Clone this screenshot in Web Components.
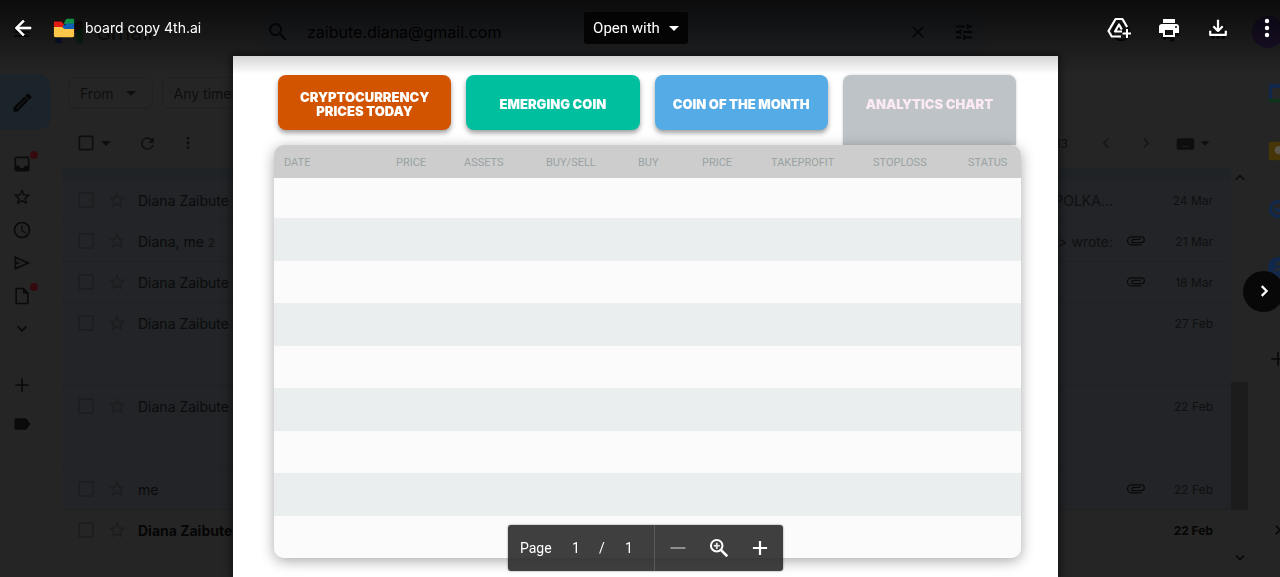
<!DOCTYPE html>
<html lang="en">
<head>
<meta charset="utf-8">
<title>board copy 4th.ai</title>
<style>
html, body { margin: 0; height: 100%; overflow: hidden; background: #252525; font-family: Roboto, "Liberation Sans", sans-serif; font-size: 14px; }
</style>
</head>
<body>
<mail-app></mail-app>
<file-viewer name="board copy 4th.ai"></file-viewer>

<script>
const define = (name, html, setup) => {
  const tpl = document.createElement('template');
  tpl.innerHTML = `<style>
    *, :host { box-sizing: border-box; }
    :host { display: block; }
    button { font: inherit; color: inherit; background: none; border: 0; padding: 0; margin: 0; }
  </style>` + html;
  customElements.define(name, class extends HTMLElement {
    constructor() {
      super();
      this.attachShadow({ mode: 'open' });
    }
    connectedCallback() {
      if (this.shadowRoot.childNodes.length) return;
      this.shadowRoot.append(tpl.content.cloneNode(true));
      if (setup) setup(this, this.shadowRoot);
    }
  });
};

/* Icon shapes, all on a 24-unit grid */
const ICONS = {
  menu: '<path d="M3 6h18v2H3zm0 5h18v2H3zm0 5h18v2H3z"/>',
  back: '<path d="M20 11H7.83l5.59-5.59L12 4l-8 8 8 8 1.41-1.41L7.83 13H20z" stroke="currentColor" stroke-width=".6"/>',
  search: '<path d="M15.5 14h-.79l-.28-.27A6.47 6.47 0 0 0 16 9.5 6.5 6.5 0 1 0 9.5 16c1.61 0 3.09-.59 4.23-1.57l.27.28v.79l5 4.99L20.49 19zm-6 0a4.5 4.5 0 1 1 0-9 4.5 4.5 0 0 1 0 9z"/>',
  close: '<path d="M19 6.41 17.59 5 12 10.59 6.41 5 5 6.41 10.59 12 5 17.59 6.41 19 12 13.41 17.59 19 19 17.59 13.41 12z"/>',
  tune: '<path d="M3 17v2h6v-2zM3 5v2h10V5zm10 16v-2h8v-2h-8v-2h-2v6zM7 9v2H3v2h4v2h2V9zm14 4v-2H11v2zm-6-4h2V7h4V5h-4V3h-2z"/>',
  pencil: '<path d="M14.06 9.02l.92.92L5.92 19H5v-.92zM17.66 3c-.25 0-.51.1-.7.29l-1.83 1.83 3.75 3.75 1.83-1.83a1 1 0 0 0 0-1.41l-2.34-2.34A1 1 0 0 0 17.66 3zm-3.6 3.19L3 17.25V21h3.75L17.81 9.94z" stroke="currentColor" stroke-width=".8"/>',
  inbox: '<path d="M19 3H5a2 2 0 0 0-2 2v14c0 1.1.9 2 2 2h14a2 2 0 0 0 2-2V5a2 2 0 0 0-2-2zm0 11h-4c0 1.66-1.34 3-3 3s-3-1.34-3-3H5V5h14z"/>',
  star: '<path d="m22 9.24-7.19-.62L12 2 9.19 8.63 2 9.24l5.46 4.73L5.82 21 12 17.27 18.18 21l-1.63-7.03zM12 15.4l-3.76 2.27 1-4.28-3.32-2.88 4.38-.38L12 6.1l1.71 4.04 4.38.38-3.32 2.88 1 4.28z"/>',
  clock: '<path d="M12 2a10 10 0 1 0 0 20 10 10 0 0 0 0-20zm0 18a8 8 0 1 1 0-16 8 8 0 0 1 0 16zm.5-13H11v6l5.2 3.2.8-1.3-4.5-2.7z"/>',
  send: '<path d="M3 3.5v17L22 12zm2 3L17 12 5 17.5v-4l6-1.5-6-1.5z"/>',
  file: '<path d="M14 2H6a2 2 0 0 0-2 2v16c0 1.1.9 2 2 2h12a2 2 0 0 0 2-2V8zM6 20V4h7v5h5v11z"/>',
  down: '<path d="M7.41 8.09 12 12.67l4.59-4.58L18 9.5l-6 6-6-6z"/>',
  up: '<path d="M7.41 15.91 12 11.33l4.59 4.58L18 14.5l-6-6-6 6z"/>',
  left: '<path d="M15.41 7.41 14 6l-6 6 6 6 1.41-1.41L10.83 12z"/>',
  right: '<path d="M8.59 16.59 13.17 12 8.59 7.41 10 6l6 6-6 6z"/>',
  next: '<path d="m9 5.5 6.500 6.500L9 18.500" fill="none" stroke="currentColor" stroke-width="3"/>',
  add: '<path d="M20 13h-7v7h-2v-7H4v-2h7V4h2v7h7z"/>',
  label: '<path d="M17.6 5.8C17.3 5.3 16.7 5 16 5H5C3.9 5 3 5.900 3 7v10c0 1.100.9 2 2 2h11c.7 0 1.300-.3 1.600-.8L22 12z"/>',
  caret: '<path d="M6 9.500l6 6 6-6z"/>',
  box: '<path d="M19 5v14H5V5zm0-2H5a2 2 0 0 0-2 2v14c0 1.100.9 2 2 2h14a2 2 0 0 0 2-2V5a2 2 0 0 0-2-2z"/>',
  refresh: '<path d="M17.65 6.35A8 8 0 1 0 19.730 14h-2.080A6 6 0 1 1 12 6c1.660 0 3.140.69 4.220 1.780L13 11h7V4z"/>',
  more: '<circle cx="12" cy="5" r="2.200"/><circle cx="12" cy="12" r="2.200"/><circle cx="12" cy="19" r="2.200"/>',
  keyboard: '<path d="M20 6H4a2 2 0 0 0-2 2v9c0 1.100.9 2 2 2h16a2 2 0 0 0 2-2V8a2 2 0 0 0-2-2zM8 15h8v1H8z" fill-rule="evenodd"/>',
  clip: '<path d="M18.500 16.500H6.500a4 4 0 0 1 0-9.500h12a3.500 3.500 0 0 1 0 7H9a2 2 0 0 1 0-4h9" fill="none" stroke="currentColor" stroke-width="1.500"/>',
  help: '<circle cx="12" cy="12" r="9" fill="none" stroke="currentColor" stroke-width="2"/><path d="M9 9.500a3 3 0 1 1 3 3.500v1.500M12 16v2" fill="none" stroke="currentColor" stroke-width="2"/>',
  gear: '<circle cx="12" cy="12" r="6" fill="none" stroke="currentColor" stroke-width="2.500"/><circle cx="12" cy="12" r="9" fill="none" stroke="currentColor" stroke-width="3" stroke-dasharray="4 5.420"/>',
  apps: '<path d="M4 4h4v4H4zm6 0h4v4h-4zm6 0h4v4h-4zM4 10h4v4H4zm6 0h4v4h-4zm6 0h4v4h-4zM4 16h4v4H4zm6 0h4v4h-4zm6 0h4v4h-4z"/>',
  drive: '<path d="M14 20.500H4.800L1.500 15 8.600 3h6.800l4.700 8M15 15.500H8L12 8.500l2.800 5" fill="none" stroke="currentColor" stroke-width="2.200" stroke-linejoin="round"/><path d="M19 13h2v3.500h3.500v2H21V22h-2v-3.500h-3.500v-2H19z"/>',
  print: '<path d="M19 8H5a3 3 0 0 0-3 3v6h4v4h12v-4h4v-6a3 3 0 0 0-3-3zm-3 11H8v-5h8zm3-7a1 1 0 1 1 0-2 1 1 0 0 1 0 2zM18 3H6v4h12z"/>',
  download: '<path d="M12 3v12M6.800 10l5.200 5.200 5.200-5.200M3.500 15v4.500h17V15" fill="none" stroke="currentColor" stroke-width="2.400" stroke-linejoin="round"/>',
  minus: '<path d="M3 11h18v2H3z"/>',
  zoom: '<circle cx="9.500" cy="9.500" r="6.300" fill="none" stroke="currentColor" stroke-width="2.200"/><path d="m14 14 7 7" stroke="currentColor" stroke-width="2.800"/><path d="M9 6.500h1.200V9h2.500v1.200h-2.500v2.500H9v-2.500H6.500V9H9z" stroke="currentColor" stroke-width=".5"/>',
  plus: '<path d="M12 3.500v17M3.500 12h17" stroke="currentColor" stroke-width="2.600"/>',
  folder: '<path d="M1 5h8l3 3v6H1z" fill="#e01b12"/><path d="M13 4l2-2h8v6H12z" fill="#0f9045"/><path d="M11 9h2l2-2h8v9H10z" fill="#0c5fb4"/><path d="M1 11h8c2 0 2 2 4 2h10v7.500a1.500 1.500 0 0 1-1.500 1.500h-19A1.500 1.500 0 0 1 1 20.500z" fill="#fdc84a"/>',
  gmail: '<path d="M1 5h5v16H2.500A1.500 1.500 0 0 1 1 19.500z" fill="#0b1530"/><path d="M18 5h5v14.500a1.500 1.500 0 0 1-1.500 1.500H18z" fill="#0b2412"/><path d="M1 5c0-2 2-3 4-1.500l7 5 7-5C21 2 23 3 23 5v3l-11 7L1 8z" fill="#1c0f0d"/>',
  calendar: '<path d="M1 1h22v22H1z" fill="#12284a"/><path d="M5 6h18v13H5z" fill="#272727"/><path d="M1 19h22v4H1z" fill="#0d3519"/>',
  keep: '<rect x="1" y="1" width="24" height="22" rx="2" fill="#463607"/><circle cx="13" cy="11" r="5" fill="#59554b"/>',
  tasks: '<circle cx="12" cy="12" r="9" fill="none" stroke="#11284b" stroke-width="4"/><path d="m8 11 4 4 8-9" fill="none" stroke="#142b50" stroke-width="3"/>',
  contacts: '<circle cx="12" cy="12" r="12" fill="#10284c"/><circle cx="12" cy="8" r="3" fill="#242a31"/><path d="M6 17c0-5 12-5 12 0z" fill="#242a31"/>'
};
customElements.define('ui-icon', class extends HTMLElement {
  static get observedAttributes() { return ['name']; }
  constructor() { super(); this.attachShadow({ mode: 'open' }); }
  connectedCallback() { this.render(); }
  attributeChangedCallback() { this.render(); }
  render() {
    const s = this.getAttribute('size') || 20;
    this.shadowRoot.innerHTML = `<style>:host{display:block;flex:none;width:${s}px;height:${s}px}svg{display:block}</style>
      <svg width="${s}" height="${s}" viewBox="0 0 24 24" fill="currentColor" aria-hidden="true">${ICONS[this.getAttribute('name')] || ''}</svg>`;
  }
});

/* ---------- Mail client behind the viewer ---------- */
define('mail-header', `
<style>
  :host { display: flex; align-items: center; height: 64px; color: #080808; }
  .menu { padding-left: 12px; width: 54px; }
  .brand { display: flex; align-items: center; gap: 12px; width: 206px; font-size: 22px; color: #101010; }
  form { display: flex; align-items: center; flex: 1; height: 48px; margin-right: 122px; padding: 0 13px 0 6px; border-radius: 24px; background: #222427; }
  input { flex: 1; min-width: 0; margin: 0 0 0 17px; padding: 0; border: 0; background: none; font: 16px Inter, sans-serif; color: #020202; outline: 0; }
  .clear { margin-right: 25px; }
  .tools { display: flex; align-items: center; gap: 27px; }
  .avatar { width: 32px; height: 32px; border-radius: 50%; background: #1b122b; margin: 0 -4px 0 -3px; }
</style>
<button class="menu" aria-label="Main menu"><ui-icon name="menu"></ui-icon></button>
<div class="brand"><ui-icon name="gmail" size="30"></ui-icon><span>Gmail</span></div>
<form role="search">
  <ui-icon name="search" size="24"></ui-icon>
  <input aria-label="Search mail" value="zaibute.diana@gmail.com">
  <button type="button" class="clear" aria-label="Clear search"><ui-icon name="close"></ui-icon></button>
  <button type="button" aria-label="Search options"><ui-icon name="tune" size="22"></ui-icon></button>
</form>
<div class="tools">
  <ui-icon name="help" size="22"></ui-icon><ui-icon name="gear" size="22"></ui-icon><ui-icon name="apps"></ui-icon>
  <div class="avatar"></div>
</div>`);

define('rail-item', `
<style>
  :host { position: relative; display: flex; justify-content: center; align-items: center; width: 44px; height: 33px; color: #0a0a0a; }
  :host([unread])::after { content: ""; position: absolute; left: 30px; top: 4px; width: 8px; height: 8px; border-radius: 50%; background: #350a0f; }
</style><ui-icon></ui-icon>`, (el, root) => root.querySelector('ui-icon').setAttribute('name', el.getAttribute('icon')));

define('mail-rail', `
<style>
  :host { display: flex; flex-direction: column; padding-top: 10px; }
  .compose { display: flex; align-items: center; width: 51px; height: 56px; padding-left: 11px; margin-bottom: 17px; border-radius: 0 14px 14px 0; background: #1b242b; color: #060606; }
  .gap { margin-top: 23px; }
  .tag { margin-top: 6px; }
</style>
<button class="compose" aria-label="Compose"><ui-icon name="pencil" size="23"></ui-icon></button>
<rail-item icon="inbox" unread></rail-item>
<rail-item icon="star"></rail-item>
<rail-item icon="clock"></rail-item>
<rail-item icon="send"></rail-item>
<rail-item icon="file" unread></rail-item>
<rail-item icon="down"></rail-item>
<rail-item class="gap" icon="add"></rail-item>
<rail-item class="tag" icon="label"></rail-item>`);

define('mail-row', `
<style>
  :host { display: grid; grid-template-columns: 16px 34px 1fr auto 46px 54px; grid-template-rows: 40px; align-content: start; align-items: center; height: 41px; padding: 0 18px 0 16px; flex: none;
    background: #222427; border-bottom: 1px solid #202124; color: #0b0b0c; font-family: Inter, sans-serif; }
  :host([tall]) { height: 83px; }
  :host([unread]) { background: #252525; border-color: transparent; font-weight: 700; color: #050505; }
  input { appearance: none; width: 16px; height: 16px; margin: 0; border: 2px solid #1d1e20; border-radius: 2px; }
  ui-icon.star { color: #1c1d1f; margin-left: 13px; }
  .from { padding-left: 10px; white-space: nowrap; }
  .subject { color: #0f1011; white-space: nowrap; }
  .clip { display: flex; justify-content: center; color: #0a0a0a; }
  time { font-size: 12px; text-align: right; color: #0f1011; white-space: nowrap; }
  :host([unread]) time { color: #050505; }
  .n { font-size: 12px; color: #111; }
</style>
<input type="checkbox" aria-label="Select conversation">
<ui-icon class="star" name="star" size="20"></ui-icon>
<span class="from"><slot></slot> <span class="n"></span></span>
<span class="subject"></span>
<span class="clip"></span>
<time></time>`, (el, root) => {
  root.querySelector('.n').textContent = el.getAttribute('count') || '';
  root.querySelector('.subject').textContent = el.getAttribute('subject') || '';
  root.querySelector('time').textContent = el.getAttribute('date');
  if (el.hasAttribute('clip')) root.querySelector('.clip').innerHTML = '<ui-icon name="clip" size="20"></ui-icon>';
});

define('mail-list', `
<style>
  :host { display: grid; grid-template-columns: 1fr 17px; grid-template-rows: 104px 1fr; min-width: 0; overflow: hidden; color: #0e0e0e; }
  .bars { grid-column: 1 / 3; }
  .chips { display: flex; gap: 9px; height: 58px; align-items: center; padding-left: 6px; font-family: Inter, sans-serif; }
  .chips button { display: flex; align-items: center; gap: 7px; height: 32px; padding: 0 11px; border: 1px solid #202020; border-radius: 8px; white-space: nowrap; }
  .tools { display: flex; align-items: center; height: 42px; padding: 0 34px 0 14px; }
  .tools > button { display: flex; align-items: center; }
  .select { width: 62px; }
  .reload { width: 42px; }
  .count { margin-left: auto; font-size: 12px; font-family: Inter, sans-serif; }
  .prev { margin-left: 28px; opacity: .6; }
  .forward { margin: 0 19px 0 20px; opacity: .6; }
  .rows { display: flex; flex-direction: column; overflow: hidden; }
  .rows::before { content: ""; flex: none; height: 12px; background: #202326; }
  .scroll { display: flex; flex-direction: column; justify-content: space-between; align-items: center; color: #090909; overflow: hidden; padding-bottom: 10px; }
  .thumb { width: 17px; height: 128px; margin: auto 0 39px; background: #1c1c1c; }
</style>
<div class="bars">
  <div class="chips">
    <button>From <ui-icon name="caret" size="20"></ui-icon></button>
    <button>Any time <ui-icon name="caret" size="20"></ui-icon></button>
  </div>
  <div class="tools">
    <button class="select" aria-label="Select"><ui-icon name="box"></ui-icon><ui-icon name="caret"></ui-icon></button>
    <button class="reload" aria-label="Refresh"><ui-icon name="refresh" size="19"></ui-icon></button>
    <button aria-label="More"><ui-icon name="more" size="16"></ui-icon></button>
    <span class="count">13</span>
    <button class="prev" aria-label="Newer"><ui-icon name="left"></ui-icon></button>
    <button class="forward" aria-label="Older"><ui-icon name="right"></ui-icon></button>
    <button aria-label="Input tools"><ui-icon name="keyboard" size="21"></ui-icon><ui-icon name="caret" size="18"></ui-icon></button>
  </div>
</div>
<div class="rows">
  <mail-row date="24 Mar" subject="POLKA...">Diana Zaibute</mail-row>
  <mail-row date="21 Mar" count="2" subject="a&gt; wrote:" clip>Diana, me</mail-row>
  <mail-row date="18 Mar" clip>Diana Zaibute</mail-row>
  <mail-row date="27 Feb" tall>Diana Zaibute</mail-row>
  <mail-row date="22 Feb" tall>Diana Zaibute</mail-row>
  <mail-row date="22 Feb" clip>me</mail-row>
  <mail-row date="22 Feb" unread>Diana Zaibute</mail-row>
</div>
<div class="scroll"><ui-icon name="up" size="18"></ui-icon><div class="thumb"></div><ui-icon name="down" size="18"></ui-icon></div>`);

define('mail-side', `
<style>
  :host { display: flex; flex-direction: column; padding: 19px 0 0 20px; overflow: hidden; color: #080808; }
  ui-icon { margin-bottom: 38px; }
  .last { margin: 34px 0 0; }
  .grow { flex: 1; }
  .end { margin-bottom: 37px; }
</style>
<ui-icon name="calendar"></ui-icon><ui-icon name="keep"></ui-icon><ui-icon name="tasks"></ui-icon><ui-icon name="contacts"></ui-icon>
<ui-icon class="last" name="add"></ui-icon><div class="grow"></div><ui-icon class="end" name="right"></ui-icon>`);

define('mail-app', `
<style>
  :host { display: grid; grid-template-columns: 62px 1fr 32px; grid-template-rows: 64px 1fr; height: 100vh; overflow: hidden; background: #252525; }
  mail-header { grid-column: 1 / 4; }
</style>
<mail-header></mail-header><mail-rail></mail-rail><mail-list></mail-list><mail-side></mail-side>`);

/* ---------- Document ---------- */
define('board-tab', `
<style>
  :host { flex: 1; }
  button { display: block; width: 100%; height: 55px; padding-top: 2px; border-radius: 8px; background: var(--tab); color: #fff; font: 900 13px/14px Inter, sans-serif; text-align: center; text-transform: uppercase; white-space: nowrap; box-shadow: 0 3px 5px rgba(0,0,0,.38); }
  :host([current]) button { height: 70px; padding-bottom: 14px; border-radius: 8px 8px 0 0; color: #fbeaf4; box-shadow: 0 0 3px rgba(0,0,0,.2); }
</style><button role="tab"><slot></slot></button>`);

define('board-table', `
<style>
  :host { border-radius: 10px; overflow: hidden; box-shadow: 0 3px 14px rgba(0,0,0,.34); position: relative; background: #fbfbfb; }
  table { width: 100%; table-layout: fixed; border-collapse: collapse; }
  th { height: 33px; padding: 3px 0 0 10px; text-align: left; font: 11px/14px Roboto, sans-serif; color: #98a2a3; background: #cdcdcd; white-space: nowrap; }
  td { padding: 0; height: 42px; background: #fbfbfb; }
  tbody tr:first-child td { height: 40px; }
  tbody tr:nth-child(even) td { height: 43px; background: #eaeeef; }
</style>
<table><colgroup></colgroup><thead><tr></tr></thead><tbody></tbody></table>`, (el, root) => {
  const cols = [['DATE',112],['PRICE',68],['ASSETS',82],['BUY/SELL',92],['BUY',64],['PRICE',69],['TAKEPROFIT',102],['STOPLOSS',95],['STATUS',63]];
  root.querySelector('colgroup').innerHTML = cols.map(c => `<col style="width:${c[1]}px">`).join('');
  root.querySelector('thead tr').innerHTML = cols.map(c => `<th scope="col">${c[0]}</th>`).join('');
  root.querySelector('tbody').innerHTML = '<tr><td colspan="9"></td></tr>'.repeat(9);
});

define('board-page', `
<style>
  :host { background: #fff; padding: 19px 37px 0 41px; box-shadow: 0 0 8px 2px rgba(0,0,0,.5); }
  .tabs { display: flex; gap: 15px; height: 70px; padding: 0 5px 0 4px; }
</style>
<div class="tabs" role="tablist">
  <board-tab style="--tab:#d35400">Cryptocurrency<br>prices today</board-tab>
  <board-tab style="--tab:#00bf9f">Emerging coin</board-tab>
  <board-tab style="--tab:#55abe5">Coin of the month</board-tab>
  <board-tab style="--tab:#bdc3c7" current>Analytics chart</board-tab>
</div>
<board-table></board-table>`);

/* ---------- Viewer chrome ---------- */
define('viewer-bar', `
<style>
  :host { position: absolute; inset: 0 0 auto; height: 74px; color: #fff; background: linear-gradient(rgba(0,0,0,.68), rgba(0,0,0,0)); }
  .row { display: grid; grid-template-columns: 1fr auto 1fr; align-items: center; height: 56px; padding: 0 1px 0 11px; }
  .title, .actions { display: flex; align-items: center; }
  .title > ui-icon { margin: 0 10px 0 18px; }
  h1 { margin: 0; font: 14px/20px Inter, sans-serif; white-space: nowrap; }
  .open { display: flex; align-items: center; gap: 4px; height: 32px; padding: 0 4px 0 9px; border-radius: 3px; background: #040404; font-size: 15px; white-space: nowrap; margin-right: 18px; }
  .actions { justify-content: flex-end; gap: 26px; }
</style>
<div class="row">
  <div class="title"><button aria-label="Close"><ui-icon name="back" size="24"></ui-icon></button><ui-icon name="folder" size="22"></ui-icon><h1></h1></div>
  <button class="open">Open with <ui-icon name="caret" size="20"></ui-icon></button>
  <div class="actions">
    <button aria-label="Add shortcut to Drive"><ui-icon name="drive" size="24"></ui-icon></button>
    <button aria-label="Print"><ui-icon name="print" size="24"></ui-icon></button>
    <button aria-label="Download"><ui-icon name="download" size="22"></ui-icon></button>
    <button aria-label="More actions"><ui-icon name="more" size="24"></ui-icon></button>
  </div>
</div>`, (el, root) => root.querySelector('h1').textContent = el.getAttribute('name'));

define('page-controls', `
<style>
  :host { display: flex; width: 275px; height: 46px; border-radius: 3px; background: rgba(42,42,42,.9); color: #fff; box-shadow: 0 0 2px rgba(0,0,0,.5); }
  .pages { display: flex; align-items: center; width: 147px; padding-left: 12px; border-right: 1px solid #5a5a5a; }
  label { width: 44px; }
  input { width: 24px; padding: 0; margin: 0; border: 0; background: none; color: inherit; font: inherit; text-align: center; }
  .slash { width: 28px; text-align: center; }
  .total { width: 26px; text-align: center; }
  .zoom { display: flex; flex: 1; align-items: center; justify-content: space-between; padding: 0 13px; }
  .off { opacity: .5; }
</style>
<div class="pages"><label for="p">Page</label><input id="p" value="1"><span class="slash">/</span><span class="total">1</span></div>
<div class="zoom">
  <button class="off" aria-label="Zoom out"><ui-icon name="minus"></ui-icon></button>
  <button aria-label="Fit to width"><ui-icon name="zoom" size="22"></ui-icon></button>
  <button aria-label="Zoom in"><ui-icon name="plus"></ui-icon></button>
</div>`);

define('file-viewer', `
<style>
  :host { position: fixed; inset: 0; overflow: hidden; }
  .stage { display: flex; height: 100%; padding: 56px 222px 0 233px; }
  board-page { flex: 1; min-width: 0; }
  .dock { position: absolute; inset: auto 222px 6px 233px; display: flex; justify-content: center; }
  .next { position: absolute; right: -4px; top: 50%; margin-top: -18px; width: 41px; height: 41px; border-radius: 50%; background: #080808; color: #fff; display: flex; align-items: center; justify-content: center; }
</style>
<div class="stage"><board-page></board-page></div>
<viewer-bar></viewer-bar>
<button class="next" aria-label="Next file"><ui-icon name="next" size="18"></ui-icon></button>
<div class="dock"><page-controls></page-controls></div>`, (el, root) => {
  const bar = root.querySelector('viewer-bar');
  bar.setAttribute('name', el.getAttribute('name'));
  bar.shadowRoot.querySelector('h1').textContent = el.getAttribute('name');
});
</script>
</body>
</html>
